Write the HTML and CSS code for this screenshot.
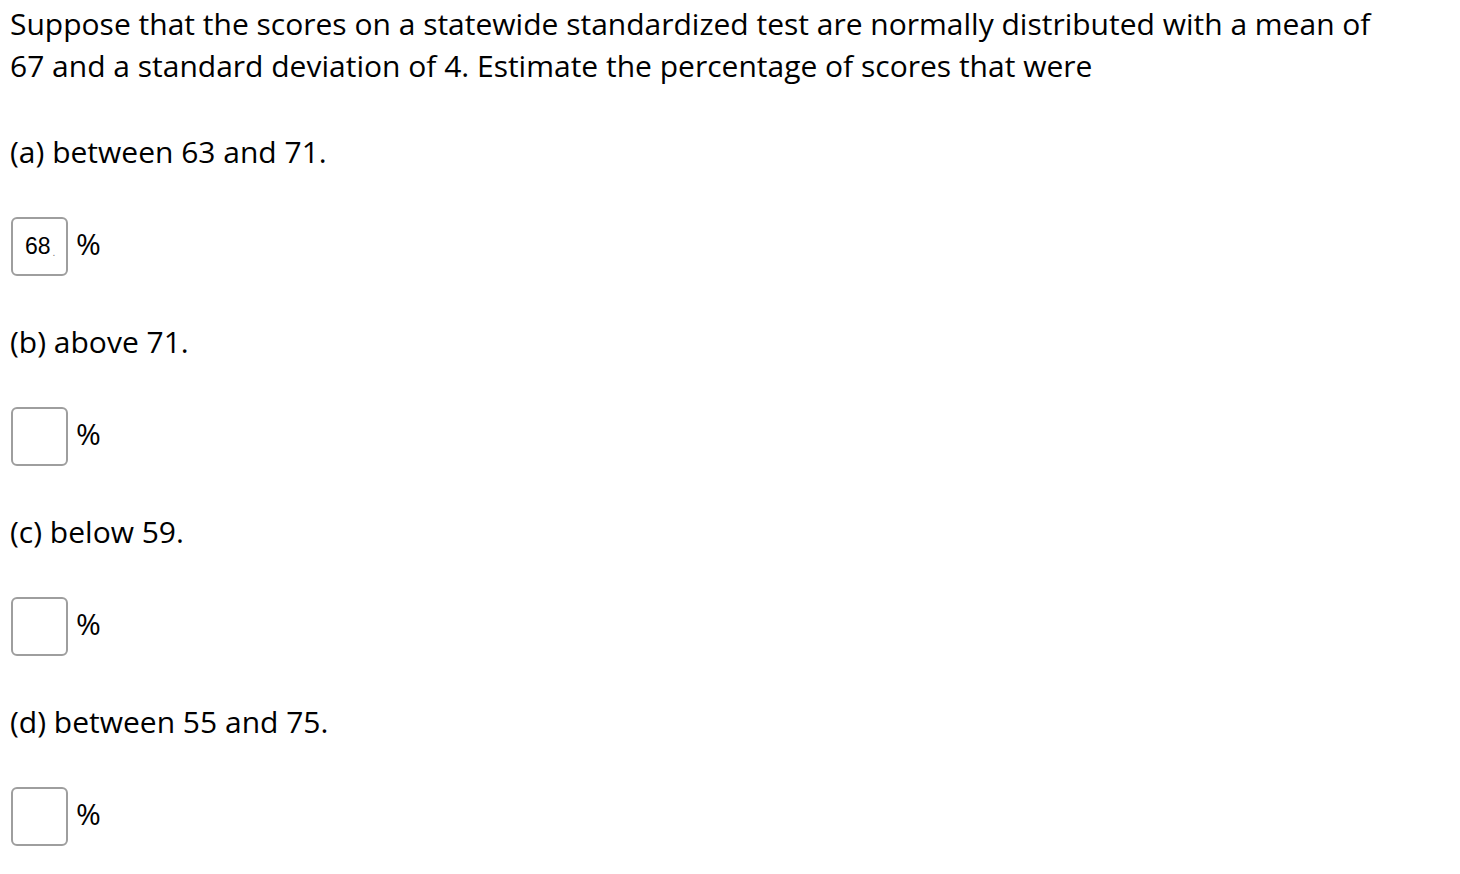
FILE: index.html
```html
<!DOCTYPE html>
<html>
<head>
<meta charset="utf-8">
<link rel="stylesheet" href="styles.css">
</head>
<body>
<div class="page">
  <p class="stem">Suppose that the scores on a statewide standardized test are normally distributed with a mean of 67 and a standard deviation of 4. Estimate the percentage of scores that were</p>

  <p class="part">(a) between 63 and 71.</p>
  <div class="answer"><div class="box"><span class="val">68</span><span class="dot">.</span></div><span class="unit">%</span></div>

  <p class="part">(b) above 71.</p>
  <div class="answer"><div class="box"></div><span class="unit">%</span></div>

  <p class="part">(c) below 59.</p>
  <div class="answer"><div class="box"></div><span class="unit">%</span></div>

  <p class="part">(d) between 55 and 75.</p>
  <div class="answer"><div class="box"></div><span class="unit">%</span></div>
</div>
</body>
</html>
```

FILE: styles.css
```css
html, body {
  margin: 0;
  padding: 0;
  background: #fff;
}
.page {
  padding: 3px 10px 0 10px;
  font-family: "Open Sans", sans-serif;
  font-size: 30px;
  line-height: 42px;
  color: #000;
  width: 1380px;
}
.stem {
  margin: 0 0 44px 0;
}
.part {
  margin: 0 0 44px 0;
}
.answer {
  display: flex;
  align-items: center;
  gap: 8px;
  margin: 0 0 45px 1px;
}
.box {
  box-sizing: border-box;
  width: 57px;
  height: 59px;
  border: 2px solid #9e9e9e;
  border-radius: 6px;
  display: flex;
  align-items: center;
  padding-left: 12px;
  overflow: hidden;
  white-space: nowrap;
}
.val {
  font-family: "Liberation Sans", Arial, sans-serif;
  font-size: 23px;
  line-height: 1;
}
.dot {
  font-family: "Liberation Sans", Arial, sans-serif;
  font-size: 10px;
  line-height: 1;
  color: #777;
  align-self: center;
  margin-top: 12px;
  margin-left: 2px;
}
.unit {
  font-size: 30px;
  line-height: 42px;
  margin-top: -6px;
}
```
